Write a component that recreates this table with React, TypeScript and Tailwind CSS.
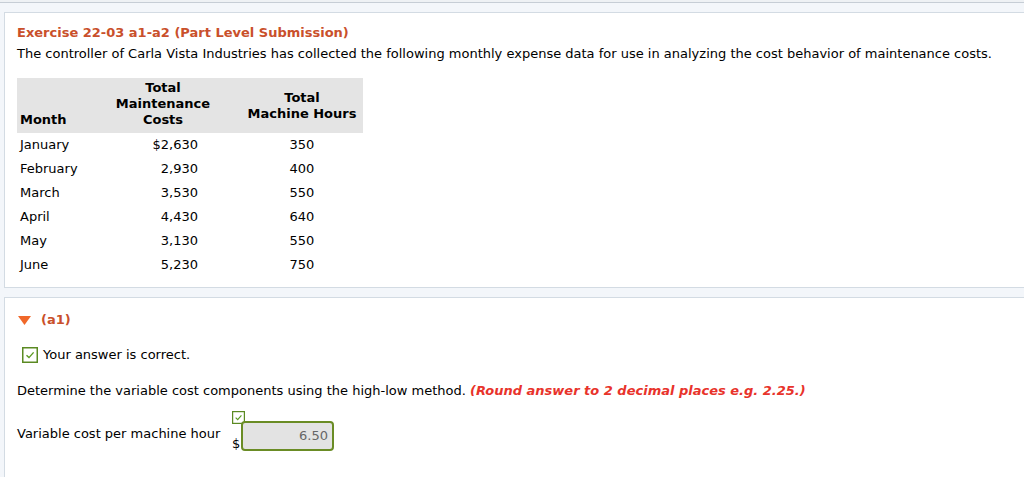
import React from 'react';

const rows = [
  { month: 'January', cost: '$2,630', hours: '350' },
  { month: 'February', cost: '2,930', hours: '400' },
  { month: 'March', cost: '3,530', hours: '550' },
  { month: 'April', cost: '4,430', hours: '640' },
  { month: 'May', cost: '3,130', hours: '550' },
  { month: 'June', cost: '5,230', hours: '750' },
];

function Check({ size }: { size: number }) {
  return (
    <svg width={size} height={size} viewBox="0 0 16 16" className="block">
      <rect x="0.75" y="0.75" width="14.5" height="14.5" fill="#fff" stroke="#5b8a22" strokeWidth="1.5" />
      <path d="M4.5 8.2 L7 10.6 L11.6 5.4" fill="none" stroke="#5b9a22" strokeWidth="1.4" />
    </svg>
  );
}

export default function App() {
  return (
    <div
      className="w-[1024px] h-[477px] overflow-hidden bg-[#f3f6fa] text-[13px] text-black"
      style={{ fontFamily: '"DejaVu Sans", Verdana, sans-serif' }}
    >
      {/* top strip */}
      <div className="h-[2px] bg-[#eef1f4]" />
      <div className="h-px bg-[#c6cdd5]" />

      <div className="pl-[4px] pt-[9px]">
        {/* Question panel */}
        <div className="bg-white border-l border-t border-b border-[#d3dbe3] pl-[12px] pt-[12px] pb-[10px]">
          <h1 className="font-bold text-[#c9502b] leading-[16px]">
            Exercise 22-03 a1-a2 (Part Level Submission)
          </h1>
          <p className="mt-[5px] leading-[16px]">
            The controller of Carla Vista Industries has collected the following monthly expense data for use in analyzing the cost behavior of maintenance costs.
          </p>

          <div className="mt-[16px] w-[346px]">
            <div className="grid grid-cols-[94px_104px_148px] bg-[#e4e4e4] h-[55px] font-bold leading-[16px]">
              <div className="self-end pl-[3px] pb-[5px]">Month</div>
              <div className="self-end text-center pb-[5px]">
                Total
                <br />
                Maintenance
                <br />
                Costs
              </div>
              <div className="self-center text-center pl-[26px]">
                Total
                <br />
                Machine Hours
              </div>
            </div>
            {rows.map((r) => (
              <div key={r.month} className="grid grid-cols-[94px_104px_148px] h-[24px] items-center leading-[16px]">
                <div className="pl-[3px]">{r.month}</div>
                <div className="text-right pr-[17px]">{r.cost}</div>
                <div className="text-center pl-[26px]">{r.hours}</div>
              </div>
            ))}
          </div>
        </div>

        {/* Part a1 panel */}
        <div className="mt-[9px] h-[200px] bg-white border-l border-t border-[#d3dbe3] pl-[12px] pt-[14px]">
          <div className="flex items-center gap-[10px] leading-[16px]">
            <svg width="13" height="9" viewBox="0 0 13 9" className="ml-px">
              <path d="M0 0 H13 L6.5 9 Z" fill="#f0682a" />
            </svg>
            <span className="font-bold text-[#c9502b]">(a1)</span>
          </div>

          <div className="mt-[19px] ml-[5px] flex items-center gap-[5px] leading-[16px]">
            <Check size={16} />
            <span>Your answer is correct.</span>
          </div>

          <p className="mt-[20px] leading-[16px]">
            Determine the variable cost components using the high-low method.{' '}
            <span className="font-bold italic text-[#e8332b]">(Round answer to 2 decimal places e.g. 2.25.)</span>
          </p>

          <div className="mt-[12px] flex items-start">
            <div className="w-[215px] pt-[15px] leading-[16px]">Variable cost per machine hour</div>
            <div className="flex flex-col">
              <Check size={13} />
              <div className="flex items-end -mt-[3px]">
                <span className="leading-[16px] mb-[-1px] w-[9px]">$</span>
                <div className="w-[93px] h-[30px] rounded-[4px] border-2 border-[#6a8c25] bg-[#e3e3e3] text-[#666] text-right pr-[4px] leading-[26px]">
                  6.50
                </div>
              </div>
            </div>
          </div>
        </div>
      </div>
    </div>
  );
}
